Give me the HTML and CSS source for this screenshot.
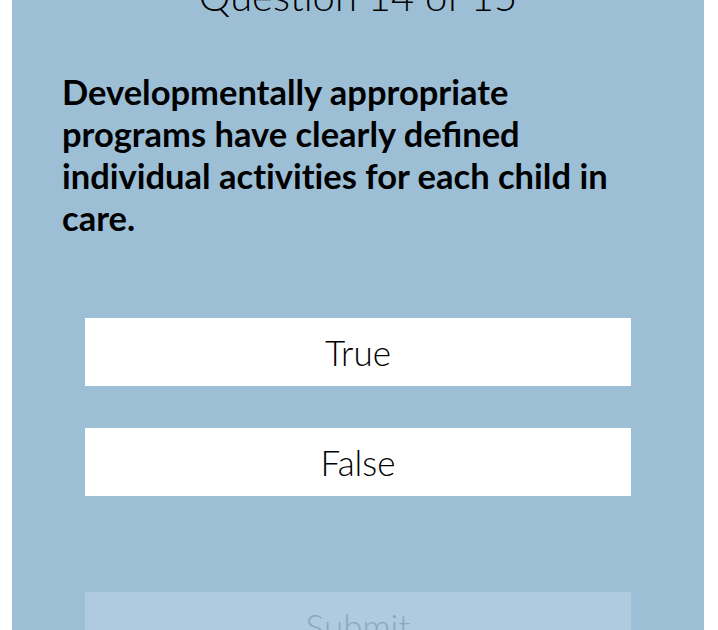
FILE: index.html
```html
<!DOCTYPE html>
<html lang="en">
<head>
<meta charset="utf-8">
<title>Quiz</title>
<link rel="stylesheet" href="styles.css">
</head>
<body>
<main class="quiz">
  <h2 class="quiz-count"><span class="plain">Question</span> 14 of 15</h2>
  <p class="quiz-question">Developmentally appropriate programs have clearly defined individual <span class="plain">activities</span> for each child in care.</p>
  <div class="quiz-answers">
    <button class="answer" type="button">True</button>
    <button class="answer" type="button">False</button>
  </div>
  <button class="submit" type="button" disabled>Submit</button>
</main>
</body>
</html>
```
FILE: styles.css
```css
html, body {
  margin: 0;
  padding: 0;
  background: #ffffff;
  overflow: hidden;
}

body {
  font-family: Lato, "Open Sans", sans-serif;
  color: #000;
}

/* words set without the t-i ligature */
.plain {
  font-feature-settings: "liga" 0, "clig" 0;
  font-variant-ligatures: none;
}

.quiz {
  margin: -28px 14px 0 12px;
  background: #9cbfd6;
  padding: 0 50px 40px;
  min-height: 700px;
  display: flex;
  flex-direction: column;
}

.quiz-count {
  margin: 0;
  font-weight: 300;
  font-size: 40px;
  line-height: 48px;
  text-align: center;
}

.quiz-question {
  margin: 51px 0 0;
  font-weight: 700;
  font-size: 34.5px;
  line-height: 42px;
}

.quiz-answers {
  margin: 79px 23px 0;
  display: flex;
  flex-direction: column;
  gap: 42px;
}

.answer,
.submit {
  display: block;
  width: 100%;
  height: 68px;
  border: 0;
  border-radius: 0;
  padding: 0;
  font-family: inherit;
  font-weight: 300;
  font-size: 35px;
  text-align: center;
}

.answer {
  background: #ffffff;
  color: #000;
}

.submit {
  margin: 96px 23px 0;
  width: auto;
  background: #aecbdf;
  color: #8aa9be;
}
```
